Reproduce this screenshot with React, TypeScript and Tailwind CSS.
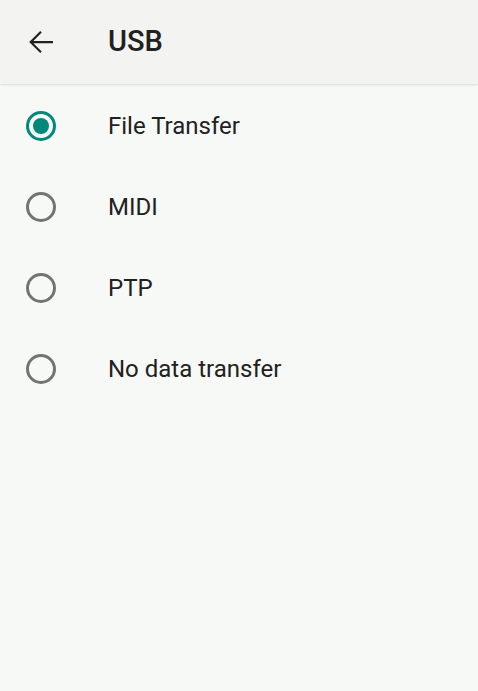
import React, { useState } from 'react';

const options = ['File Transfer', 'MIDI', 'PTP', 'No data transfer'];

const Radio: React.FC<{ checked: boolean }> = ({ checked }) => (
  <svg width="34" height="34" viewBox="0 0 34 34">
    <circle
      cx="17"
      cy="17"
      r="13.5"
      fill="none"
      stroke={checked ? '#00897b' : '#737373'}
      strokeWidth="3"
    />
    {checked && <circle cx="17" cy="17" r="8" fill="#00897b" />}
  </svg>
);

export default function App() {
  const [selected, setSelected] = useState(0);

  return (
    <div className="min-h-[691px] bg-[#f7f9f7] font-['Roboto',sans-serif] text-[#212121]">
      <div className="flex h-[84px] items-center bg-[#f3f4f2] shadow-[0_1px_2px_rgba(0,0,0,0.12)]">
        <button className="ml-[23px] flex h-[36px] w-[36px] items-center justify-center">
          <svg width="36" height="36" viewBox="0 0 24 24" fill="#212121">
            <path d="M20 11.25H6.9l5.6-5.6-1-1.05L4.1 12l7.4 7.4 1-1.05-5.6-5.6H20v-1.5z" />
          </svg>
        </button>
        <h1 className="ml-[49px] text-[29px] font-medium">USB</h1>
      </div>

      <div className="pt-[1px]">
        {options.map((label, i) => (
          <div
            key={label}
            onClick={() => setSelected(i)}
            className="flex h-[81px] cursor-pointer items-center"
          >
            <div className="ml-[24px] flex w-[34px] items-center justify-center">
              <Radio checked={selected === i} />
            </div>
            <span className="ml-[50px] text-[24px]">{label}</span>
          </div>
        ))}
      </div>
    </div>
  );
}
